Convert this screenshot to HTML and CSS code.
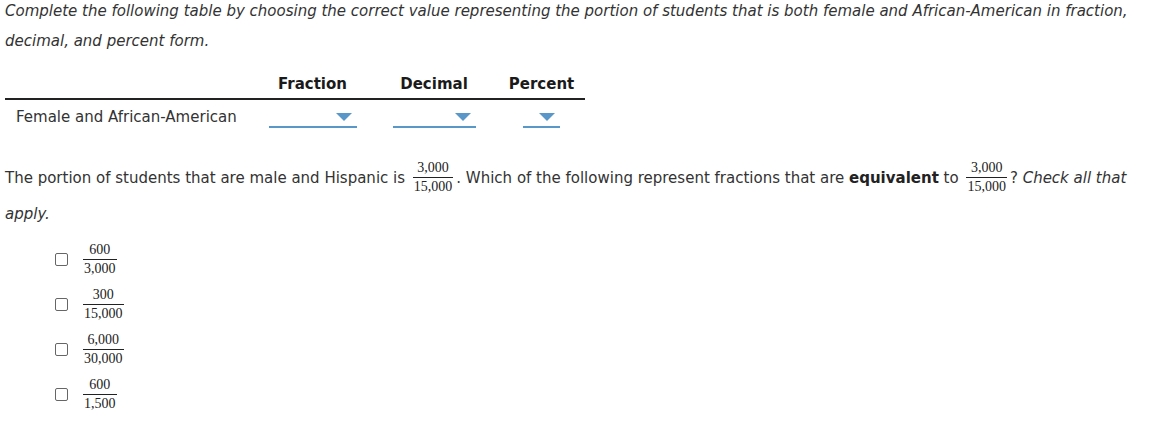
FILE: index.html
```html
<!DOCTYPE html>
<html>
<head>
<meta charset="utf-8">
<link rel="stylesheet" href="styles.css">
</head>
<body>
<div class="page">
  <p class="intro">Complete the following table by choosing the correct value representing the portion of students that is both female and African-American in fraction, decimal, and percent form.</p>

  <div class="table">
    <div class="thead">
      <div class="cell label"></div>
      <div class="cell head">Fraction</div>
      <div class="cell head">Decimal</div>
      <div class="cell head">Percent</div>
    </div>
    <div class="trow">
      <div class="cell label">Female and African-American</div>
      <div class="cell"><span class="select w1"><span class="arrow"></span></span></div>
      <div class="cell"><span class="select w2"><span class="arrow"></span></span></div>
      <div class="cell"><span class="select w3"><span class="arrow"></span></span></div>
    </div>
  </div>

  <p class="question">The portion of students that are male and Hispanic is <span class="frac"><span class="num">3,000</span><span class="den">15,000</span></span>. Which of the following represent fractions that are <b>equivalent</b> to <span class="frac"><span class="num">3,000</span><span class="den">15,000</span></span>? <i>Check all that apply.</i></p>

  <ul class="choices">
    <li><span class="box"></span><span class="frac"><span class="num">600</span><span class="den">3,000</span></span></li>
    <li><span class="box"></span><span class="frac"><span class="num">300</span><span class="den">15,000</span></span></li>
    <li><span class="box"></span><span class="frac"><span class="num">6,000</span><span class="den">30,000</span></span></li>
    <li><span class="box"></span><span class="frac"><span class="num">600</span><span class="den">1,500</span></span></li>
  </ul>
</div>
</body>
</html>
```
FILE: styles.css
```css
html, body {
  margin: 0;
  padding: 0;
  background: #ffffff;
}
.page {
  padding: 0 0 0 5px;
  font-family: "DejaVu Sans", Verdana, sans-serif;
  font-size: 15px;
  color: #333333;
}
.intro {
  margin: -4px 0 0 0;
  font-style: italic;
  line-height: 30px;
  width: 1140px;
}
.table {
  margin-top: 14px;
  width: 580px;
}
.thead, .trow {
  display: grid;
  grid-template-columns: 250px 115px 128px 87px;
  align-items: center;
}
.thead {
  height: 28px;
  border-bottom: 2px solid #222;
}
.head {
  font-weight: bold;
  text-align: center;
  color: #1a1a1a;
}
.trow {
  height: 32px;
}
.trow .label {
  padding-left: 11px;
  padding-top: 2px;
}
.trow .cell {
  display: flex;
  justify-content: center;
  align-items: center;
}
.trow .label {
  justify-content: flex-start;
}
.select {
  display: block;
  height: 16px;
  border-bottom: 2px solid #5a97c9;
  position: relative;
  margin-top: 6px;
}
.w1 { width: 88px; }
.w2 { width: 83px; }
.w3 { width: 37px; }
.arrow {
  position: absolute;
  right: 5px;
  top: 3px;
  width: 0;
  height: 0;
  border-left: 8.5px solid transparent;
  border-right: 8.5px solid transparent;
  border-top: 8px solid #5a97c9;
}
.question {
  margin: 28px 0 0 0;
  line-height: 34px;
  width: 1140px;
}
.question b {
  color: #222;
}
.frac {
  display: inline-flex;
  flex-direction: column;
  align-items: center;
  vertical-align: middle;
  font-family: "Liberation Serif", "Times New Roman", serif;
  font-size: 14px;
  line-height: 18px;
  color: #222;
  margin: 0 3px;
  position: relative;
  top: -1px;
}
.frac .num {
  padding: 0 1px;
}
.frac .den {
  border-top: 1px solid #222;
  padding: 0 1px;
}
.choices {
  list-style: none;
  margin: 6px 0 0 0;
  padding: 0 0 0 50px;
}
.choices li {
  display: flex;
  align-items: center;
  height: 45px;
}
.box {
  width: 11px;
  height: 11px;
  border: 1px solid #666;
  border-radius: 2px;
  margin-right: 15px;
}
.choices .frac {
  margin: 0;
  top: 0;
}
```
